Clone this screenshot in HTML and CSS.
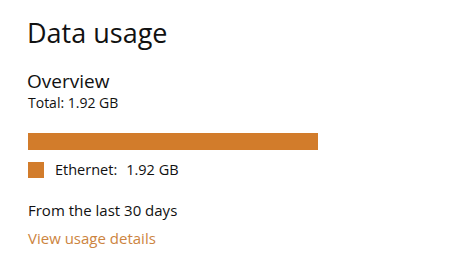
FILE: index.html
```html
<!DOCTYPE html>
<html>
<head>
<meta charset="utf-8">
<link rel="stylesheet" href="styles.css">
</head>
<body>
<div class="page">
  <h1 class="title">Data usage</h1>
  <h2 class="section">Overview</h2>
  <div class="total">Total: 1.92 GB</div>
  <div class="bar"></div>
  <div class="legend">
    <span class="swatch"></span>
    <span class="label">Ethernet:</span>
    <span class="value">1.92 GB</span>
  </div>
  <div class="period">From the last 30 days</div>
  <a class="link" href="#">View usage details</a>
</div>
</body>
</html>
```
FILE: styles.css
```css
html, body {
  margin: 0;
  padding: 0;
  background: #ffffff;
}
body {
  font-family: "Open Sans", "Noto Sans", sans-serif;
  color: #111111;
  width: 474px;
  height: 270px;
  overflow: hidden;
}
.page {
  padding: 14px 0 0 27px;
  display: flex;
  flex-direction: column;
  align-items: flex-start;
}
.title {
  margin: 0;
  font-weight: 400;
  font-size: 27px;
  line-height: 38px;
}
.section {
  margin: 17px 0 0 0;
  font-weight: 400;
  font-size: 19px;
  line-height: 24px;
}
.total {
  font-size: 14px;
  line-height: 20px;
  margin-left: 1px;
}
.bar {
  margin: 20px 0 0 1px;
  width: 290px;
  height: 17px;
  background: #d27c2b;
}
.legend {
  margin: 11px 0 0 1px;
  display: flex;
  align-items: center;
  font-size: 14.5px;
  line-height: 18px;
}
.swatch {
  width: 16px;
  height: 16px;
  background: #d27c2b;
  margin-right: 11px;
}
.value {
  margin-left: 9px;
}
.period {
  margin: 21px 0 0 1px;
  font-size: 15px;
  line-height: 20px;
}
.link {
  margin: 8px 0 0 1px;
  font-size: 15px;
  line-height: 20px;
  color: #cc8440;
  text-decoration: none;
}
```
